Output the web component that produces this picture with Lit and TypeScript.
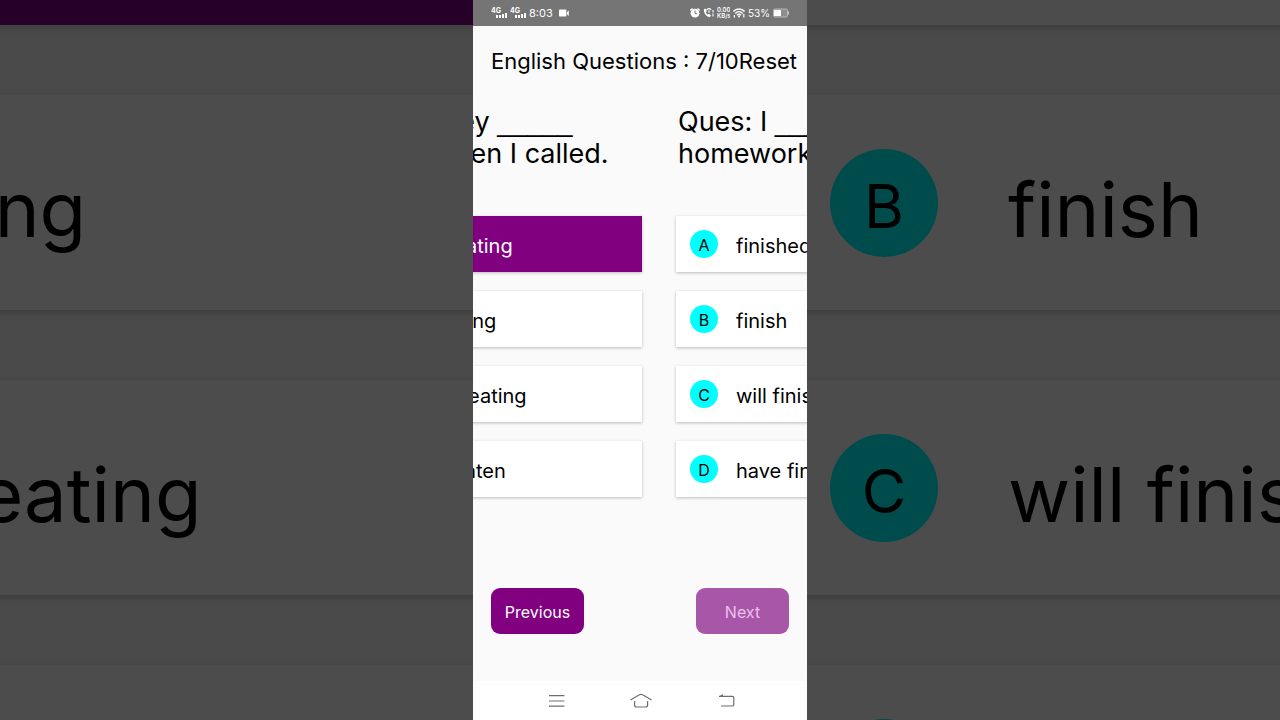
import { LitElement, html, css, svg } from "lit";
import { customElement, property, state } from "lit/decorators.js";
import { classMap } from "lit/directives/class-map.js";

interface Question {
  before: string;
  after: string;
  options: string[];
  chosen: number | null;
}

const QUESTIONS: Question[] = [
  {
    before: "Ques: They",
    after: "dinner when I called.",
    options: ["were eating", "are eating", "will be eating", "have eaten"],
    chosen: 0,
  },
  {
    before: "Ques: I",
    after: "my homework.",
    options: ["finished", "finish", "will finish", "have finished"],
    chosen: null,
  },
];

const LETTERS = ["A", "B", "C", "D"];

/* Dimmed, enlarged view of the answer cards that fills the window behind the phone. */
@customElement("quiz-backdrop")
export class QuizBackdrop extends LitElement {
  static styles = css`
    :host {
      display: block;
      overflow: hidden;
      background: #4a4a4a;
      color: #000;
    }
    .track {
      display: flex;
      margin-left: -567px;
      margin-top: -190px;
    }
    .slide {
      flex: 0 0 1280px;
      box-sizing: border-box;
      padding: 0 65px;
      display: flex;
      flex-direction: column;
      gap: 70px;
    }
    .card {
      height: 215px;
      flex: none;
      box-sizing: border-box;
      padding: 0 52px;
      display: flex;
      align-items: center;
      gap: 70px;
      background: #4c4c4c;
      box-shadow: 0 3px 8px rgba(0, 0, 0, 0.18);
      white-space: nowrap;
    }
    .card.chosen {
      background: #260026;
    }
    .letter {
      width: 108px;
      height: 108px;
      border-radius: 50%;
      background: #004c4c;
      display: flex;
      align-items: center;
      justify-content: center;
      font-size: 61px;
      line-height: 72px;
      padding-top: 6px;
      box-sizing: border-box;
    }
    .label {
      font-size: 76px;
      line-height: 92px;
      padding-top: 12px;
    }
  `;

  render() {
    return html`<div class="track">
      ${QUESTIONS.map(
        (q) => html`<div class="slide">
          ${q.options.map(
            (o, i) => html`<div class=${classMap({ card: true, chosen: q.chosen === i })}>
              <span class="letter">${LETTERS[i]}</span><span class="label">${o}</span>
            </div>`
          )}
        </div>`
      )}
    </div>`;
  }
}

@customElement("status-bar")
export class StatusBar extends LitElement {
  static styles = css`
    :host {
      display: flex;
      align-items: center;
      justify-content: space-between;
      height: 26px;
      padding: 0 18px;
      background: #757575;
      color: #fff;
    }
    .side {
      display: flex;
      align-items: center;
      gap: 3px;
    }
    svg {
      display: block;
      flex: none;
    }
    .clock {
      font-size: 11px;
      line-height: 16px;
    }
    .percent {
      font-size: 10px;
      line-height: 16px;
    }
    .tiny {
      font-weight: 600;
      font-size: 6px;
    }
    .net {
      font-weight: 700;
      font-size: 7px;
    }
  `;

  private signal() {
    return html`<svg width="16" height="12" viewBox="0 0 16 12" fill="#fff">
      <text class="net" x="0" y="6">4G</text>
      <rect x="5" y="8" width="2" height="3" />
      <rect x="8" y="8" width="2" height="3" />
      <rect x="11" y="7" width="2" height="4" />
      <rect x="14" y="6" width="2" height="5" />
    </svg>`;
  }

  render() {
    return html`
      <div class="side">
        ${this.signal()}${this.signal()}
        <span class="clock">8:03</span>
        <svg width="14" height="8" viewBox="0 0 14 8" fill="#fff">
          <rect x="3" y="0.6" width="7.4" height="7" rx="0.8" />
          <path d="M11 3.2 L12.8 1.4 V7 L11 5.2 Z" />
        </svg>
      </div>
      <div class="side">
        <svg width="10" height="10" viewBox="0 0 10 10">
          <circle cx="5" cy="5.2" r="4.4" fill="#fff" />
          <path d="M0.4 2.4 L2.6 0.6 M9.6 2.4 L7.4 0.6" stroke="#fff" stroke-width="1.4" />
          <path d="M5 2.6 V5.6 H7.2" fill="none" stroke="#757575" stroke-width="1" />
        </svg>
        <svg width="11" height="10" viewBox="0 0 11 10" fill="none" stroke="#fff">
          <path d="M1 1 C0.2 4.8 3 8.6 6.8 9.2 L8 7.2 L5.8 5.8 L4.6 6.6 C3.6 5.8 3.2 5 3 4 L3.8 3.2 L3 0.8 Z" fill="#fff" stroke="none" />
          <path d="M3.8 1.8 C5 0.6 7 0.6 8.2 1.8 M4.9 3.4 C5.5 2.8 6.5 2.8 7.1 3.4 M6 4.2 V5" stroke-width="1.1" />
          <path d="M10 2 V4.4 M10 5.6 V8.6" stroke-width="1.1" />
        </svg>
        <svg width="13" height="12" viewBox="0 0 13 12" fill="#fff">
          <text class="tiny" x="0" y="5">0.00</text>
          <text class="tiny" x="0" y="11">KB/s</text>
        </svg>
        <svg width="12" height="10" viewBox="0 0 12 10" fill="none" stroke="#fff" stroke-width="1.4">
          <path d="M0.4 3.4 C3.4 0.2 8.6 0.2 11.6 3.4 M2.2 5.4 C4.4 3.2 7.6 3.2 9.8 5.4 M4 7.2 C5.2 6 6.8 6 8 7.2" />
          <circle cx="6" cy="8.6" r="1" fill="#fff" stroke="none" />
          <path d="M10.8 6 V9.6 M1.4 7 V9.6" stroke-width="1.2" />
        </svg>
        <span class="percent">53%</span>
        <svg width="16" height="10" viewBox="0 0 16 10">
          <rect x="0.5" y="1" width="14" height="8" rx="1.2" fill="#8d8d8d" stroke="#b8b8b8" />
          <rect x="1" y="2" width="7" height="6" fill="#fff" />
          <rect x="15" y="3.4" width="1" height="3.2" fill="#c4c4c4" />
        </svg>
      </div>
    `;
  }
}

@customElement("quiz-slide")
export class QuizSlide extends LitElement {
  @property({ attribute: false }) question!: Question;

  static styles = css`
    :host {
      display: block;
      box-sizing: border-box;
      padding: 10px 17px 0;
    }
    .question {
      margin: 0;
      height: 110px;
      padding-left: 2px;
      font-weight: 400;
      font-size: 27px;
      line-height: 32px;
    }
    .blank {
      font-family: "Liberation Sans", sans-serif;
      line-height: 1;
    }
    .options {
      display: flex;
      flex-direction: column;
      gap: 19px;
    }
    .option {
      height: 56px;
      border: 0;
      padding: 0 14px;
      display: flex;
      align-items: center;
      gap: 18px;
      background: #fff;
      box-shadow: 0 1px 3px rgba(0, 0, 0, 0.25);
      font: inherit;
      color: #000;
      text-align: left;
      white-space: nowrap;
    }
    .option.chosen {
      background: #800080;
      color: #fff;
    }
    .letter {
      width: 28px;
      height: 28px;
      border-radius: 50%;
      background: #00ffff;
      color: #000;
      display: flex;
      align-items: center;
      justify-content: center;
      font-size: 16px;
      line-height: 20px;
      padding-top: 2px;
      box-sizing: border-box;
    }
    .label {
      font-size: 20px;
      line-height: 24px;
      padding-top: 4px;
    }
  `;

  render() {
    const q = this.question;
    return html`
      <h2 class="question">${q.before} <span class="blank">_____</span> ${q.after}</h2>
      <div class="options">
        ${q.options.map(
          (o, i) => html`<button
            type="button"
            class=${classMap({ option: true, chosen: q.chosen === i })}
          >
            <span class="letter">${LETTERS[i]}</span><span class="label">${o}</span>
          </button>`
        )}
      </div>
    `;
  }
}

@customElement("app-root")
export class AppRoot extends LitElement {
  @state() private current = 7;

  static styles = css`
    :host {
      display: grid;
      grid-template-columns: minmax(0, 1fr);
      grid-template-rows: 100vh;
      overflow: hidden;
      font-family: Inter, Roboto, "Liberation Sans", sans-serif;
    }
    .backdrop,
    .phone {
      grid-area: 1 / 1;
    }
    .phone {
      justify-self: center;
      width: 334px;
      max-width: 100%;
      z-index: 1;
      display: flex;
      flex-direction: column;
      overflow: hidden;
      background: #fafafa;
      color: #000;
    }
    .header {
      display: flex;
      align-items: center;
      justify-content: space-between;
      height: 70px;
      padding: 0 10px 0 18px;
      font-size: 22px;
      line-height: 28px;
      white-space: nowrap;
    }
    .title {
      margin: 0;
      font: inherit;
    }
    .reset {
      border: 0;
      padding: 0;
      background: none;
      color: inherit;
      font: inherit;
    }
    .viewport {
      flex: 1;
      min-height: 0;
      overflow: hidden;
    }
    .track {
      display: flex;
      margin-left: -148px;
    }
    .slide {
      flex: 0 0 334px;
    }
    .actions {
      display: flex;
      justify-content: space-between;
      padding: 0 18px 47px;
    }
    .action {
      width: 93px;
      height: 46px;
      border: 0;
      border-radius: 9px;
      padding: 2px 0 0;
      background: #800080;
      color: #fff;
      font: inherit;
      font-size: 16px;
      line-height: 20px;
    }
    .action:disabled {
      background: #a856a8;
      color: #ecc0ec;
    }
    .nav {
      display: flex;
      justify-content: space-between;
      align-items: center;
      height: 39px;
      padding: 0 72px 0 75px;
      background: #fff;
    }
    .key {
      border: 0;
      padding: 0;
      background: none;
      display: block;
    }
    .key svg {
      display: block;
    }
  `;

  private key(label: string, width: number, shape: unknown) {
    return html`<button type="button" class="key" aria-label=${label}>
      <svg width=${width} height="16" viewBox="0 0 ${width} 16" fill="none" stroke="#6e6e6e" stroke-width="1.2">
        ${shape}
      </svg>
    </button>`;
  }

  render() {
    return html`
      <quiz-backdrop class="backdrop" aria-hidden="true"></quiz-backdrop>
      <main class="phone">
        <status-bar></status-bar>
        <header class="header">
          <h1 class="title">English Questions : ${this.current}/10</h1>
          <button type="button" class="reset">Reset</button>
        </header>
        <section class="viewport">
          <div class="track">
            ${QUESTIONS.map((q) => html`<quiz-slide class="slide" .question=${q}></quiz-slide>`)}
          </div>
        </section>
        <div class="actions">
          <button type="button" class="action">Previous</button>
          <button type="button" class="action" disabled>Next</button>
        </div>
        <nav class="nav">
          ${this.key("Recent apps", 17, svg`<path d="M1 2.6 H16.4 M1 8 H16.4 M1 13.2 H16.4" />`)}
          ${this.key(
            "Home",
            24,
            svg`<path d="M0.4 7 L9.4 1.7 Q11 0.9 12.6 1.7 L21.6 7" /><path d="M4.6 8 V12 Q4.6 14 6.6 14 H15.6 Q17.6 14 17.6 12 V8" />`
          )}
          ${this.key(
            "Back",
            17,
            svg`<path d="M1 3.4 H14.2 Q15.8 3.4 15.8 5 V11.4 Q15.8 13 14.2 13 H3" /><path d="M0.8 3.6 L5 1 V3.4 Z" fill="#6e6e6e" stroke="none" />`
          )}
        </nav>
      </main>
    `;
  }
}
